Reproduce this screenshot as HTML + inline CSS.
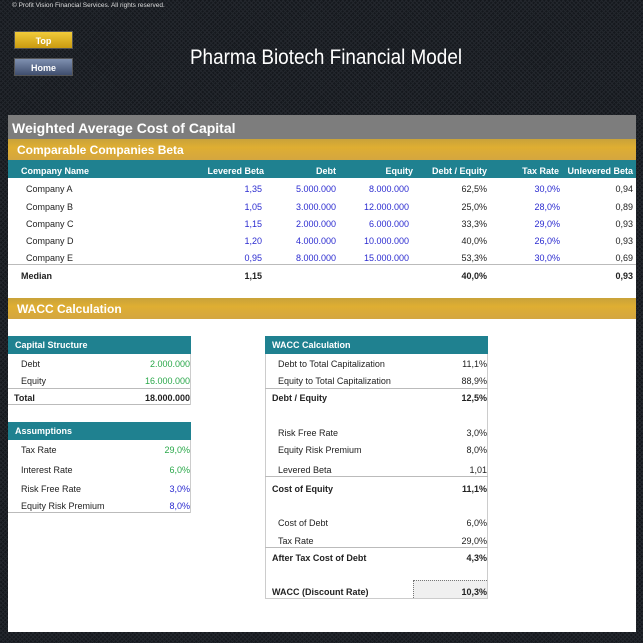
<!DOCTYPE html>
<html><head><meta charset="utf-8"><style>
*{margin:0;padding:0;box-sizing:border-box}
body{width:643px;height:643px;overflow:hidden;position:relative;font-family:"Liberation Sans",sans-serif;font-size:9px;color:#222;
background:#15181d;background-image:repeating-linear-gradient(45deg,#23272d 0 1px,transparent 1px 3px),repeating-linear-gradient(-45deg,#23272d 0 1px,transparent 1px 3px);}
.a{position:absolute}
.copy{left:12px;top:2px;color:#ddd;font-size:6.5px}
.btn{left:14px;width:59px;height:18px;color:#fff;font-weight:bold;font-size:9px;text-align:center;line-height:18px;border:1px solid #555}
.title{left:150px;width:352px;top:46px;text-align:center;color:#fff;font-size:21px;transform:scaleX(.9)}
.white{left:8px;top:115px;width:628px;height:517px;background:#fff}
.bar{left:8px;width:628px;color:#fff;font-weight:bold;padding-left:4px}
.gold{background:linear-gradient(#c9a23a,#dfae32 40%,#d4a640);font-size:12px;padding-left:9px}
.teal{background:#1f8190;color:#fff;font-weight:bold}
.t{position:absolute;white-space:nowrap}
.r{text-align:right}
.line{position:absolute;height:1px;background:#bbb}
</style></head><body>
<div class="a copy">© Profit Vision Financial Services. All rights reserved.</div>
<div class="a btn" style="top:31px;background:linear-gradient(#f2cc3a,#c99a10)">Top</div>
<div class="a btn" style="top:58px;background:linear-gradient(#7f90b0,#3f4e6e)">Home</div>
<div class="a title">Pharma Biotech Financial Model</div>
<div class="a white"></div>
<div class="a bar" style="top:115px;height:24px;background:#7d7d7d;font-size:14px;line-height:27px">Weighted Average Cost of Capital</div>
<div class="a bar gold" style="top:139px;height:21px;line-height:23px">Comparable Companies Beta</div>
<div class="a teal" style="left:8px;top:160px;width:628px;height:18px"></div>
<div class="t" style="left:21px;top:166px;color:#fff;font-weight:bold">Company Name</div>
<div class="t r" style="right:379px;top:166px;color:#fff;font-weight:bold">Levered Beta</div>
<div class="t r" style="right:307px;top:166px;color:#fff;font-weight:bold">Debt</div>
<div class="t r" style="right:230px;top:166px;color:#fff;font-weight:bold">Equity</div>
<div class="t r" style="right:156px;top:166px;color:#fff;font-weight:bold">Debt / Equity</div>
<div class="t r" style="right:84px;top:166px;color:#fff;font-weight:bold">Tax Rate</div>
<div class="t r" style="right:10px;top:166px;color:#fff;font-weight:bold">Unlevered Beta</div>

<div class="line" style="left:8px;top:264px;width:628px"></div>
<div class="a bar gold" style="top:298px;height:21px;line-height:23px">WACC Calculation</div>

<div class="a teal" style="left:8px;top:336px;width:183px;height:18px;padding-left:7px;line-height:19px">Capital Structure</div>
<div class="a teal" style="left:8px;top:422px;width:183px;height:18px;padding-left:7px;line-height:19px">Assumptions</div>
<div class="line" style="left:8px;top:388px;width:183px"></div>
<div class="line" style="left:8px;top:404px;width:183px"></div>
<div class="line" style="left:8px;top:512px;width:183px"></div>
<div class="a" style="left:190px;top:354px;width:1px;height:51px;background:#ccc"></div>
<div class="a" style="left:190px;top:440px;width:1px;height:73px;background:#ccc"></div>

<div class="a teal" style="left:265px;top:336px;width:223px;height:18px;padding-left:7px;line-height:19px">WACC Calculation</div>
<div class="a" style="left:265px;top:354px;width:223px;height:245px;border:1px solid #ccc;border-top:none"></div>
<div class="line" style="left:265px;top:388px;width:223px"></div>
<div class="line" style="left:265px;top:476px;width:223px"></div>
<div class="line" style="left:265px;top:547px;width:223px"></div>
<div class="a" style="left:413px;top:580px;width:74px;height:18px;background:#f0f0f0;border-top:1px dotted #777;border-left:1px dotted #777"></div>

<div id="rows"></div>
<script>
var o='';
function t(x,y,s,c,b,right){o+='<div class="t'+(right?' r':'')+'" style="'+(right?'right:'+(643-x):'left:'+x)+'px;top:'+(y-4)+'px;'+(c?'color:'+c+';':'')+(b?'font-weight:bold;':'')+'">'+s+'</div>';}
var B='#2b2bd0',G='#2aa84a';
var rows=[['Company A','1,35','5.000.000','8.000.000','62,5%','30,0%','0,94'],['Company B','1,05','3.000.000','12.000.000','25,0%','28,0%','0,89'],['Company C','1,15','2.000.000','6.000.000','33,3%','29,0%','0,93'],['Company D','1,20','4.000.000','10.000.000','40,0%','26,0%','0,93'],['Company E','0,95','8.000.000','15.000.000','53,3%','30,0%','0,69']];
var ys=[188,206,223,240,257];
rows.forEach(function(r,i){var y=ys[i];t(26,y,r[0]);t(262,y,r[1],B,0,1);t(336,y,r[2],B,0,1);t(409,y,r[3],B,0,1);t(487,y,r[4],0,0,1);t(560,y,r[5],B,0,1);t(633,y,r[6],0,0,1);});
t(21,275,'Median',0,1);t(262,275,'1,15',0,1,1);t(487,275,'40,0%',0,1,1);t(633,275,'0,93',0,1,1);
t(21,363,'Debt');t(190,363,'2.000.000',G,0,1);t(21,380,'Equity');t(190,380,'16.000.000',G,0,1);t(14,397,'Total',0,1);t(190,397,'18.000.000',0,1,1);
t(21,449,'Tax Rate');t(190,449,'29,0%',G,0,1);t(21,469,'Interest Rate');t(190,469,'6,0%',G,0,1);t(21,488,'Risk Free Rate');t(190,488,'3,0%',B,0,1);t(21,505,'Equity Risk Premium');t(190,505,'8,0%',B,0,1);
var w=[[363,'Debt to Total Capitalization','11,1%'],[380,'Equity to Total Capitalization','88,9%'],[432,'Risk Free Rate','3,0%'],[449,'Equity Risk Premium','8,0%'],[469,'Levered Beta','1,01'],[522,'Cost of Debt','6,0%'],[540,'Tax Rate','29,0%']];
w.forEach(function(a){t(278,a[0],a[1]);t(487,a[0],a[2],0,0,1);});
[[397,'Debt / Equity','12,5%'],[488,'Cost of Equity','11,1%'],[557,'After Tax Cost of Debt','4,3%'],[591,'WACC (Discount Rate)','10,3%']].forEach(function(a){t(272,a[0],a[1],0,1);t(487,a[0],a[2],0,1,1);});
document.getElementById('rows').innerHTML=o;
</script>
</body></html>
